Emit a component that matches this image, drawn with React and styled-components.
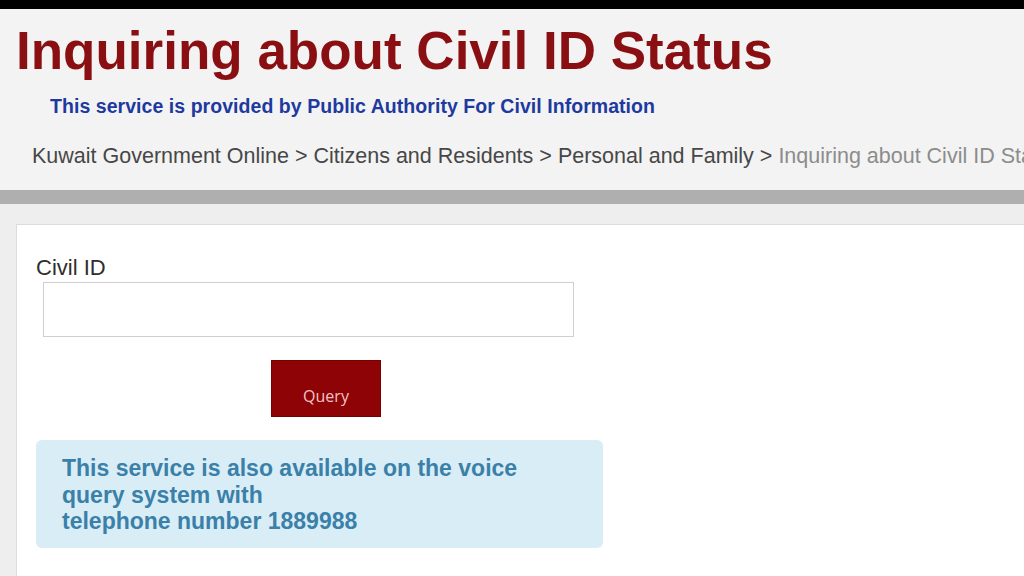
import React from 'react'
import styled, { createGlobalStyle } from 'styled-components';

const GlobalStyle = createGlobalStyle`
html, body {
    margin: 0;
    padding: 0;
    background: #efefef;
    font-family: "Liberation Sans", Arial, sans-serif;
    overflow: hidden;
}
`;

const crumbs = [
    'Kuwait Government Online',
    'Citizens and Residents',
    'Personal and Family',
];

export default function App() {
    return (
        <Page>
            <GlobalStyle />
            <TopBar />
            <Header>
                <Title>Inquiring about Civil ID Status</Title>
                <Provider>This service is provided by Public Authority For Civil Information</Provider>
                <Breadcrumb>
                    {crumbs.map((c) => (
                        <span key={c}>{c} &gt; </span>
                    ))}
                    <Current>Inquiring about Civil ID Status</Current>
                </Breadcrumb>
            </Header>
            <Stripe />
            <Content>
                <Panel>
                    <Label>Civil ID</Label>
                    <Input type="text" />
                    <ButtonRow>
                        <QueryButton>Query</QueryButton>
                    </ButtonRow>
                    <InfoBox>
                        This service is also available on the voice<br />
                        query system with<br />
                        telephone number 1889988
                    </InfoBox>
                </Panel>
            </Content>
        </Page>
    )
}

const Page = styled.div`
width: 1024px;
height: 576px;
display: flex;
flex-direction: column;
overflow: hidden;
`;

const TopBar = styled.div`
height: 9px;
background: #000;
`;

const Header = styled.header`
background: #f3f3f3;
height: 181px;
padding: 12px 0 0 16px;
box-sizing: border-box;
overflow: hidden;
`;

const Title = styled.h1`
margin: 0;
font-size: 53px;
line-height: 60px;
font-weight: bold;
color: #8a0f12;
`;

const Provider = styled.p`
margin: 14px 0 0 34px;
font-size: 19.5px;
line-height: 22px;
font-weight: bold;
color: #1e3a9e;
letter-spacing: 0.05px;
`;

const Breadcrumb = styled.nav`
margin: 27px 0 0 16px;
font-size: 21.5px;
line-height: 25px;
color: #474747;
white-space: nowrap;
`;

const Current = styled.span`
color: #8c8c8c;
`;

const Stripe = styled.div`
height: 14px;
background: #afafaf;
`;

const Content = styled.main`
flex: 1;
padding: 20px 0 0 16px;
background: #eeeeee;
`;

const Panel = styled.section`
height: 100%;
background: #fff;
border-top: 1px solid #dcdcdc;
border-left: 1px solid #dcdcdc;
padding: 32px 0 0 19px;
box-sizing: border-box;
width: 1100px;
`;

const Label = styled.label`
display: block;
font-size: 22px;
color: #2e2e2e;
line-height: 22px;
`;

const Input = styled.input`
display: block;
margin: 3px 0 0 7px;
width: 531px;
height: 55px;
box-sizing: border-box;
border: 1px solid #cfcfcf;
background: #fff;
`;

const ButtonRow = styled.div`
width: 580px;
display: flex;
justify-content: center;
margin-top: 23px;
`;

const QueryButton = styled.button`
width: 110px;
height: 57px;
background: #8e0306;
border: 1px solid #7a0000;
color: #f1c3c3;
font-family: "Open Sans", sans-serif;
font-size: 16px;
padding-top: 16px;
box-sizing: border-box;
`;

const InfoBox = styled.div`
margin-top: 23px;
width: 567px;
height: 108px;
box-sizing: border-box;
background: #d9edf6;
border-radius: 6px;
padding: 15px 26px;
font-size: 23px;
line-height: 26.5px;
font-weight: bold;
color: #3a80a8;
`;
